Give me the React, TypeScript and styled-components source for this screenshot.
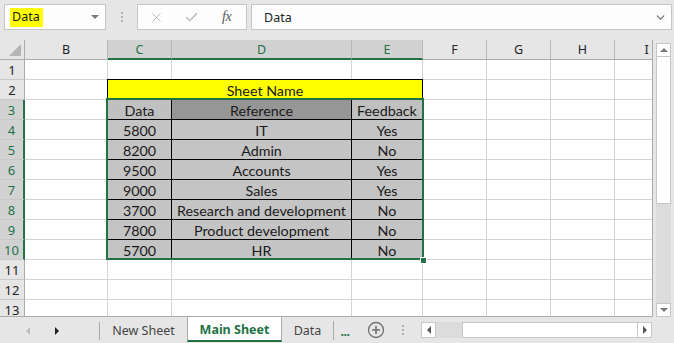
import styled, { createGlobalStyle } from 'styled-components';
import { X, Check, ChevronDown } from 'lucide-react';

const GREEN = '#217346';
const GRID = '#d4d4d4';

const GlobalStyle = createGlobalStyle`
  html, body {
    margin: 0;
    padding: 0;
    background: #e6e6e6;
  }
  body {
    width: 674px;
    height: 343px;
    overflow: hidden;
    font-family: "Noto Sans", "Open Sans", sans-serif;
  }
`;

const Window = styled.div`
  display: flex;
  flex-direction: column;
  width: 674px;
  height: 343px;
  background: #e6e6e6;
`;

/* ---------- formula bar ---------- */

const FormulaBar = styled.div`
  height: 40px;
  display: flex;
  align-items: flex-start;
  padding: 4px 0 0 4px;
  box-sizing: border-box;
`;

const Field = styled.div<{ $w: number }>`
  width: ${(p) => p.$w}px;
  height: 26px;
  box-sizing: border-box;
  background: #fdfdfd;
  border: 1px solid #c6c6c6;
  display: flex;
  align-items: center;
  font-size: 12.5px;
  color: #222;
`;

const NameBox = styled(Field)`
  padding: 0 0 0 5px;
  justify-content: space-between;
`;

const Highlight = styled.span`
  background: #ffff00;
  padding: 2px 3px 3px 2px;
  line-height: 14px;
`;

const DropTriangle = styled.span`
  width: 0;
  height: 0;
  border-left: 4px solid transparent;
  border-right: 4px solid transparent;
  border-top: 4px solid #7a7a7a;
  margin-right: 6px;
`;

const Grip = styled.div`
  width: 31px;
  height: 26px;
  display: flex;
  flex-direction: column;
  align-items: center;
  justify-content: center;
  gap: 2px;

  span {
    width: 2px;
    height: 2px;
    background: #b0b0b0;
  }
`;

const FxBox = styled(Field)`
  padding: 0 0 0 11px;
  margin-right: 4px;

  & > svg + svg {
    margin-left: 20px;
  }
`;

const Fx = styled.span`
  margin-left: 23px;
  font-family: "Liberation Serif", serif;
  font-style: italic;
  font-size: 14px;
  color: #555;
  letter-spacing: -0.5px;
`;

const Formula = styled(Field)`
  padding: 0 4px 0 12px;
  justify-content: space-between;
`;

/* ---------- sheet ---------- */

const SheetArea = styled.div`
  display: flex;
  height: 277px;
`;

const Grid = styled.div`
  position: relative;
  width: 653px;
  height: 277px;
  box-sizing: border-box;
  overflow: hidden;
  border-right: 1px solid #ababab;
  border-bottom: 1px solid #ababab;
  background: #fff;
  display: grid;
  grid-template-columns: 25px 83px 64px 180px 71px 64px 64px 64px 64px;
  grid-auto-rows: 20px;
  align-content: start;
`;

const Corner = styled.div`
  position: relative;
  background: #e6e6e6;
  border-right: 1px solid #ababab;
  border-bottom: 1px solid #ababab;
  box-sizing: border-box;

  &::after {
    content: '';
    position: absolute;
    right: 3px;
    bottom: 3px;
    width: 0;
    height: 0;
    border-left: 12px solid transparent;
    border-bottom: 12px solid #b4b4b4;
  }
`;

const ColHead = styled.div<{ $sel?: boolean }>`
  box-sizing: border-box;
  background: ${(p) => (p.$sel ? '#d2d2d2' : '#e6e6e6')};
  color: ${(p) => (p.$sel ? GREEN : '#222')};
  border-right: 1px solid #b8b8b8;
  border-bottom: ${(p) => (p.$sel ? `2px solid ${GREEN}` : '1px solid #ababab')};
  display: flex;
  align-items: center;
  justify-content: center;
  font-size: 12.5px;
  padding-top: ${(p) => (p.$sel ? 1 : 0)}px;
`;

const RowHead = styled.div<{ $sel?: boolean }>`
  box-sizing: border-box;
  background: ${(p) => (p.$sel ? '#d2d2d2' : '#e6e6e6')};
  color: ${(p) => (p.$sel ? GREEN : '#222')};
  border-right: ${(p) => (p.$sel ? `2px solid ${GREEN}` : '1px solid #ababab')};
  border-bottom: 1px solid #c8c8c8;
  display: flex;
  align-items: center;
  justify-content: center;
  font-size: 13px;
  padding-top: 1px;
`;

const Cell = styled.div`
  box-sizing: border-box;
  border-right: 1px solid ${GRID};
  border-bottom: 1px solid ${GRID};
`;

const TableCell = styled.div<{ $fill: string }>`
  box-sizing: border-box;
  background: ${(p) => p.$fill};
  border-right: 1px solid #000;
  border-bottom: 1px solid #000;
  display: flex;
  align-items: center;
  justify-content: center;
  padding-top: 2px;
  font-family: Lato, "Noto Sans", sans-serif;
  font-size: 14.3px;
  color: #1a1a1a;
  white-space: nowrap;
`;

const TitleCell = styled(TableCell)`
  grid-column: span 3;
  box-shadow: -1px 0 0 #000, 0 -1px 0 #000, -1px -1px 0 #000;
`;

const Selection = styled.div`
  position: absolute;
  left: 106px;
  top: 58px;
  width: 318px;
  height: 162px;
  box-sizing: border-box;
  border: 2px solid ${GREEN};
  pointer-events: none;

  &::after {
    content: '';
    position: absolute;
    right: -4px;
    bottom: -5px;
    width: 5px;
    height: 5px;
    background: ${GREEN};
    outline: 1px solid #fff;
  }
`;

const VScroll = styled.div`
  width: 15px;
  margin: 3px 3px 0 3px;
  display: flex;
  flex-direction: column;
  background: #dcdcdc;
`;

const ScrollButton = styled.div`
  height: 14px;
  box-sizing: border-box;
  background: #fff;
  border: 1px solid #c6c6c6;
  display: flex;
  align-items: center;
  justify-content: center;
`;

const VThumb = styled.div`
  height: 147px;
  box-sizing: border-box;
  background: #fff;
  border: 1px solid #c6c6c6;
  border-top: none;
`;

const VTrack = styled.div`
  flex: 1;
`;

const Tri = styled.span<{ $dir: 'up' | 'down' | 'left' | 'right'; $c?: string; $s?: number }>`
  width: 0;
  height: 0;
  ${(p) => {
    const s = p.$s ?? 4;
    const c = p.$c ?? '#7a7a7a';
    switch (p.$dir) {
      case 'up':
        return `border-left:${s}px solid transparent;border-right:${s}px solid transparent;border-bottom:${s}px solid ${c};`;
      case 'down':
        return `border-left:${s}px solid transparent;border-right:${s}px solid transparent;border-top:${s}px solid ${c};`;
      case 'left':
        return `border-top:${s}px solid transparent;border-bottom:${s}px solid transparent;border-right:${s}px solid ${c};`;
      default:
        return `border-top:${s}px solid transparent;border-bottom:${s}px solid transparent;border-left:${s}px solid ${c};`;
    }
  }}
`;

/* ---------- tab bar ---------- */

const TabBar = styled.div`
  height: 26px;
  display: flex;
  align-items: stretch;
  font-size: 12.5px;
`;

const NavArrows = styled.div`
  width: 100px;
  display: flex;
  align-items: center;
  padding-left: 26px;
  gap: 25px;
  box-sizing: border-box;
  border-right: 1px solid #ababab;
  margin: 5px 0 3px;
`;

const Tab = styled.div<{ $active?: boolean; $w: number }>`
  width: ${(p) => p.$w}px;
  box-sizing: border-box;
  display: flex;
  align-items: center;
  justify-content: center;
  color: ${(p) => (p.$active ? GREEN : '#444')};
  font-weight: ${(p) => (p.$active ? 700 : 400)};
  background: ${(p) => (p.$active ? '#fff' : 'transparent')};
  border-right: 1px solid #ababab;
  border-bottom: ${(p) => (p.$active ? `2px solid ${GREEN}` : 'none')};
  margin-bottom: ${(p) => (p.$active ? 1 : 0)}px;
  padding-top: ${(p) => (p.$active ? 1 : 0)}px;
  margin-top: ${(p) => (p.$active ? 0 : 4)}px;
  ${(p) => (p.$active ? 'margin-left:-1px;border-left:1px solid #ababab;' : 'margin-bottom:3px;')}
`;

const More = styled.div`
  width: 22px;
  display: flex;
  align-items: center;
  justify-content: center;
  color: ${GREEN};
  font-weight: 700;
  letter-spacing: -0.5px;
  padding-top: 2px;
`;

const AddSheet = styled.div`
  width: 40px;
  display: flex;
  align-items: center;
  justify-content: center;
`;

const HGrip = styled(Grip)`
  width: 14px;
  height: auto;
  margin-right: 11px;
`;

const HScroll = styled.div`
  width: 231px;
  height: 16px;
  margin-top: 5px;
  display: flex;
  background: #dcdcdc;
`;

const HButton = styled.div`
  width: 15px;
  box-sizing: border-box;
  background: #fff;
  border: 1px solid #c6c6c6;
  display: flex;
  align-items: center;
  justify-content: center;
`;

const HThumb = styled.div`
  width: 175px;
  margin-left: 26px;
  box-sizing: border-box;
  background: #fff;
  border: 1px solid #c6c6c6;
  border-right: none;
`;

const columns = ['B', 'C', 'D', 'E', 'F', 'G', 'H', 'I'];
const selectedCols = ['C', 'D', 'E'];

const table: [string, string, string][] = [
  ['5800', 'IT', 'Yes'],
  ['8200', 'Admin', 'No'],
  ['9500', 'Accounts', 'Yes'],
  ['9000', 'Sales', 'Yes'],
  ['3700', 'Research and development', 'No'],
  ['7800', 'Product development', 'No'],
  ['5700', 'HR', 'No'],
];

const BODY = '#c4c4c4';

function Row({ n }: { n: number }) {
  const sel = n >= 3 && n <= 10;
  const tail = ['F', 'G', 'H', 'I'].map((c) => <Cell key={c} />);

  if (n === 2) {
    return (
      <>
        <RowHead>{n}</RowHead>
        <Cell />
        <TitleCell $fill="#ffff00">Sheet Name</TitleCell>
        {tail}
      </>
    );
  }
  if (n === 3) {
    return (
      <>
        <RowHead $sel>{n}</RowHead>
        <Cell />
        <TableCell $fill="#c0c0c0">Data</TableCell>
        <TableCell $fill="#969696">Reference</TableCell>
        <TableCell $fill="#c0c0c0">Feedback</TableCell>
        {tail}
      </>
    );
  }
  if (sel) {
    const [a, b, c] = table[n - 4];
    return (
      <>
        <RowHead $sel>{n}</RowHead>
        <Cell />
        <TableCell $fill={BODY}>{a}</TableCell>
        <TableCell $fill={BODY}>{b}</TableCell>
        <TableCell $fill={BODY}>{c}</TableCell>
        {tail}
      </>
    );
  }
  return (
    <>
      <RowHead>{n}</RowHead>
      {columns.map((c) => (
        <Cell key={c} />
      ))}
    </>
  );
}

export default function App() {
  const rows = Array.from({ length: 13 }, (_, i) => i + 1);

  return (
    <>
      <GlobalStyle />
      <Window>
        <FormulaBar>
          <NameBox $w={102}>
            <Highlight>Data</Highlight>
            <DropTriangle />
          </NameBox>
          <Grip>
            <span />
            <span />
            <span />
          </Grip>
          <FxBox $w={110}>
            <X size={15} strokeWidth={1.4} color="#b3b3b3" />
            <Check size={15} strokeWidth={2} color="#b3b3b3" />
            <Fx>fx</Fx>
          </FxBox>
          <Formula $w={421}>
            <span>Data</span>
            <ChevronDown size={13} strokeWidth={2.6} color="#7a7a7a" />
          </Formula>
        </FormulaBar>

        <SheetArea>
          <Grid>
            <Corner />
            {columns.map((c) => (
              <ColHead key={c} $sel={selectedCols.includes(c)}>
                {c}
              </ColHead>
            ))}
            {rows.map((n) => (
              <Row key={n} n={n} />
            ))}
            <Selection />
          </Grid>
          <VScroll>
            <ScrollButton>
              <Tri $dir="up" $s={4} />
            </ScrollButton>
            <VThumb />
            <VTrack />
            <ScrollButton>
              <Tri $dir="down" $s={4} />
            </ScrollButton>
          </VScroll>
        </SheetArea>

        <TabBar>
          <NavArrows>
            <Tri $dir="left" $c="#bdbdbd" $s={4} />
            <Tri $dir="right" $c="#1f1f1f" $s={4} />
          </NavArrows>
          <Tab $w={88}>New Sheet</Tab>
          <Tab $w={95} $active>
            Main Sheet
          </Tab>
          <Tab $w={52}>Data</Tab>
          <More>...</More>
          <AddSheet>
            <svg width="18" height="18" viewBox="0 0 18 18">
              <circle cx="9" cy="9" r="7.5" fill="none" stroke="#707070" strokeWidth="1.3" />
              <path d="M9 5v8M5 9h8" stroke="#707070" strokeWidth="1.6" />
            </svg>
          </AddSheet>
          <HGrip>
            <span />
            <span />
            <span />
          </HGrip>
          <HScroll>
            <HButton>
              <Tri $dir="left" $c="#555" $s={4} />
            </HButton>
            <HThumb />
            <HButton>
              <Tri $dir="right" $c="#555" $s={4} />
            </HButton>
          </HScroll>
        </TabBar>
      </Window>
    </>
  );
}
